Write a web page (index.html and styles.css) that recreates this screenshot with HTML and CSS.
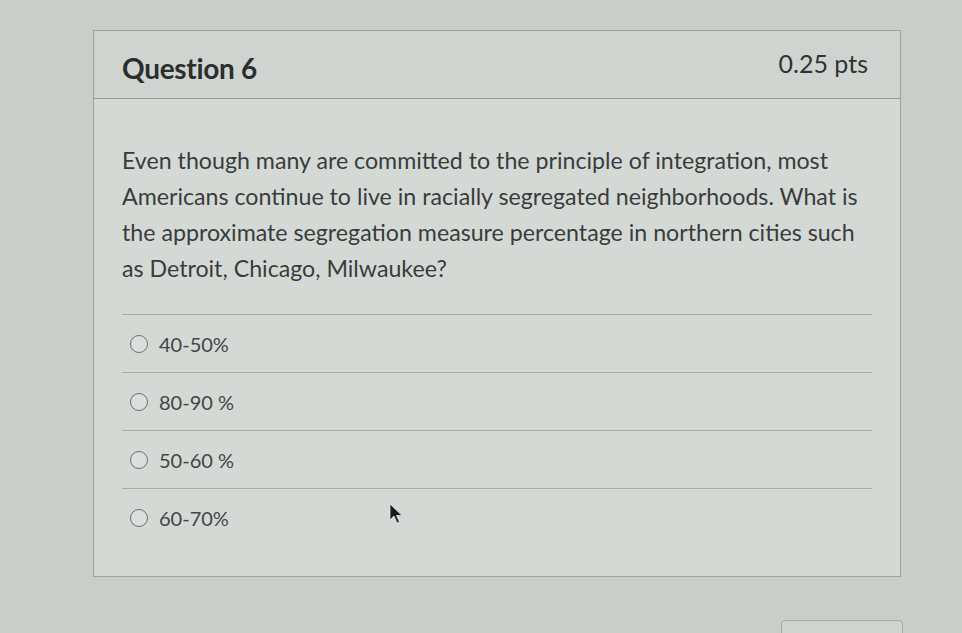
FILE: index.html
```html
<!DOCTYPE html>
<html>
<head>
<meta charset="utf-8">
<link rel="stylesheet" href="styles.css">
</head>
<body>
<div class="page">
  <div class="card">
    <div class="card-header">
      <h2 class="title">Question 6</h2>
      <span class="pts">0.25 pts</span>
    </div>
    <div class="card-body">
      <p class="question">Even though many are committed to the principle of integration, most Americans continue to live in racially segregated neighborhoods. What is the approximate segregation measure percentage in northern cities such as Detroit, Chicago, Milwaukee?</p>
      <ul class="answers">
        <li class="answer"><span class="radio"></span><span>40-50%</span></li>
        <li class="answer"><span class="radio"></span><span>80-90 %</span></li>
        <li class="answer"><span class="radio"></span><span>50-60 %</span></li>
        <li class="answer"><span class="radio"></span><span>60-70%</span></li>
      </ul>
    </div>
  </div>
  <div class="footer">
    <div class="next-btn"></div>
  </div>
  <svg class="cursor" width="14" height="22" viewBox="0 0 14 22"><path d="M1 1 L1 17 L5 13 L8 20 L10.5 19 L7.5 12.5 L13 12.5 Z" fill="#1a1c1b" stroke="#e0e3e1" stroke-width="0.8"/></svg>
</div>
</body>
</html>
```

FILE: styles.css
```css
html, body {
  margin: 0;
  padding: 0;
  background: #cacecb;
}
.page {
  position: relative;
  width: 962px;
  height: 633px;
  overflow: hidden;
  padding: 30px 0 0 93px;
  box-sizing: border-box;
  font-family: Lato, "Open Sans", sans-serif;
  color: #353a39;
}
.card {
  width: 808px;
  border: 1px solid #9fa3a0;
  background: #d5d9d6;
  box-sizing: border-box;
}
.card-header {
  display: flex;
  justify-content: space-between;
  align-items: flex-start;
  height: 68px;
  padding: 0 32px 0 28px;
  background: #d0d4d1;
  border-bottom: 1px solid #999d9a;
  box-sizing: border-box;
}
.title {
  margin: 20px 0 0;
  font-size: 28px;
  font-weight: 700;
  color: #2a2e2d;
  letter-spacing: -0.3px;
}
.pts {
  margin-top: 17px;
  font-size: 25px;
  font-weight: 400;
  color: #2f3433;
}
.card-body {
  padding: 43px 28px 30px 28px;
}
.question {
  margin: 0 0 28px;
  font-size: 23.2px;
  line-height: 36px;
  color: #383d3c;
  width: 750px;
}
.answers {
  list-style: none;
  margin: 0;
  padding: 0;
}
.answer {
  display: flex;
  align-items: center;
  gap: 11px;
  height: 58px;
  border-top: 1px solid #a9adaa;
  padding-left: 8px;
  font-size: 20px;
  color: #424745;
  box-sizing: border-box;
}
.radio {
  width: 18px;
  height: 18px;
  border: 1.5px solid #6b706d;
  border-radius: 50%;
  background: #dcdfdd;
  box-sizing: border-box;
}
.footer {
  display: flex;
  justify-content: flex-end;
  width: 810px;
  padding-top: 43px;
}
.next-btn {
  width: 120px;
  height: 40px;
  border: 1px solid #a6aaa7;
  border-radius: 4px;
  background: #d0d4d1;
}
.cursor {
  position: absolute;
  left: 389px;
  top: 503px;
}
```
